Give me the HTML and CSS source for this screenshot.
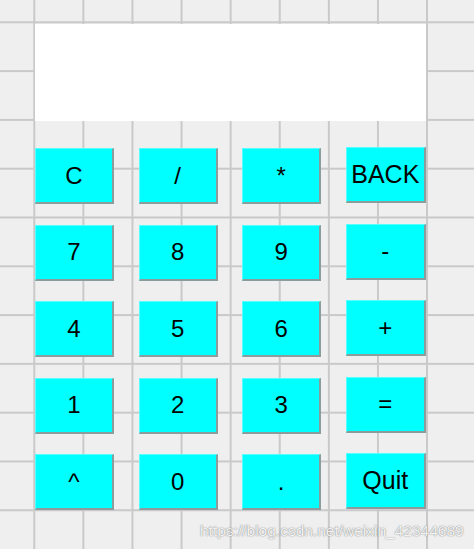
FILE: index.html
```html
<!DOCTYPE html>
<html lang="en">
  <head>
    <meta charset="utf-8">
    <title>Calculator</title>
    <link rel="stylesheet" href="styles.css">
  </head>
  <body>
    <div class="calc">
      <!-- result screen -->
      <div class="screen"></div>

      <div class="keys">
        <button class="key">C</button>
        <button class="key">/</button>
        <button class="key">*</button>
        <button class="key side word">BACK</button>

        <button class="key">7</button>
        <button class="key">8</button>
        <button class="key">9</button>
        <button class="key side">-</button>

        <button class="key">4</button>
        <button class="key">5</button>
        <button class="key">6</button>
        <button class="key side">+</button>

        <button class="key">1</button>
        <button class="key">2</button>
        <button class="key">3</button>
        <button class="key side">=</button>

        <button class="key">^</button>
        <button class="key">0</button>
        <button class="key">.</button>
        <button class="key side word">Quit</button>
      </div>
    </div>

    <p class="mark">https://blog.csdn.net/weixin_42344689</p>
  </body>
</html>
```

FILE: styles.css
```css
html, body {
  margin: 0;
  height: 100%;
}

body {
  background-color: #efefef;
  background-image:
    linear-gradient(to right, #c9c9c9 2px, transparent 2px),
    linear-gradient(to bottom, #c9c9c9 2px, transparent 2px);
  background-size: 49.1px 48.8px;
  background-position: 33.3px 21.3px;
  font-family: "Liberation Sans", Arial, sans-serif;
  overflow: hidden;
}

.calc {
  padding: 24px 0 0 35px;
}

.screen {
  width: 391px;
  height: 97px;
  background-color: #ffffff;
}

.keys {
  display: grid;
  grid-template-columns: repeat(4, 79px);
  grid-auto-rows: 56px;
  column-gap: 24.6px;
  row-gap: 20.6px;
  margin-top: 27px;
}

.key {
  box-sizing: border-box;
  margin: 0;
  padding: 0;
  border: none;
  border-right: 2px solid #8a9c9c;
  border-bottom: 2px solid #8a9c9c;
  border-top: 1px solid #5ff;
  border-left: 1px solid #5ff;
  background-color: #00ffff;
  color: #000000;
  font-family: "Liberation Sans", Arial, sans-serif;
  font-size: 24px;
  line-height: 1;
  cursor: pointer;
}

/* right column sits a hair higher and wider */
.side {
  width: 80px;
  margin-top: -1px;
  margin-bottom: 1px;
}

.word {
  font-size: 25px;
}

.mark {
  position: absolute;
  left: 200px;
  top: 522px;
  margin: 0;
  font-size: 15.5px;
  color: rgba(250, 250, 250, 0.95);
  text-shadow: 0 0 1px rgba(60, 60, 60, 0.6), 0 0 2px rgba(120, 120, 120, 0.4);
  white-space: nowrap;
}
```
